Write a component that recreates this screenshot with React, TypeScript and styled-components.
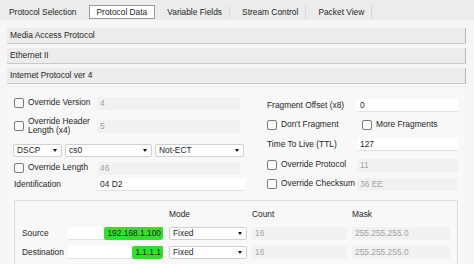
import React from 'react';
import styled, { createGlobalStyle } from 'styled-components';

const GlobalStyle = createGlobalStyle`
  html, body { margin: 0; padding: 0; background: #f6f6f6; }
  body {
    font-family: "Liberation Sans", Arial, sans-serif;
    font-size: 8.4px;
    color: #262626;
  }
`;

const Page = styled.div`
  width: 474px;
  height: 264px;
  overflow: hidden;
  display: flex;
  flex-direction: column;
`;

const TabBar = styled.div`
  height: 20px;
  flex: 0 0 20px;
  background: #ececec;
  display: flex;
  align-items: flex-start;
  padding-left: 1px;
  box-sizing: border-box;
`;

const Tab = styled.div<{ $active?: boolean; $sep?: boolean }>`
  margin-top: 5px;
  height: 14px;
  line-height: 13px;
  padding: 0 7px;
  margin-right: 4px;
  box-sizing: border-box;
  white-space: nowrap;
  background: ${p => (p.$active ? '#ffffff' : 'transparent')};
  border: 1px solid ${p => (p.$active ? '#9c9c9c' : 'transparent')};
  border-right-color: ${p => (p.$active ? '#9c9c9c' : p.$sep ? '#d8d8d8' : 'transparent')};
`;

const Sections = styled.div`
  display: flex;
  flex-direction: column;
  gap: 4px;
  padding: 8px 8px 0 7px;
`;

const SectionBar = styled.div`
  height: 16px;
  box-sizing: border-box;
  background: #ececec;
  border-right: 1px solid #b9b9b9;
  border-bottom: 1px solid #c9c9c9;
  padding-left: 3px;
  line-height: 15px;
`;

const Panel = styled.div`
  margin: 2px 8px 0 8px;
  padding: 8px 8px 0 6px;
  background: #f8f8f8;
  border-top: 1px solid #ececec;
  flex: 1;
`;

const Columns = styled.div`
  display: grid;
  grid-template-columns: 231px 1fr;
  column-gap: 22px;
`;

const Column = styled.div`
  display: flex;
  flex-direction: column;
`;

const Row = styled.div<{ $h: number; $cols?: string }>`
  height: ${p => p.$h}px;
  display: grid;
  grid-template-columns: ${p => p.$cols || '83px 1fr'};
  align-items: center;
`;

const CheckLabel = styled.label`
  display: flex;
  align-items: center;
  gap: 4px;
  line-height: 9.5px;
  white-space: nowrap;
`;

const Box = styled.span`
  flex: 0 0 10px;
  width: 10px;
  height: 10px;
  box-sizing: border-box;
  border: 1px solid #7a7a7a;
  border-radius: 2px;
  background: #fff;
`;

const Field = styled.div<{ $disabled?: boolean; $right?: number }>`
  height: 13px;
  line-height: 13px;
  box-sizing: border-box;
  padding-left: 3px;
  margin-right: ${p => p.$right || 0}px;
  background: ${p => (p.$disabled ? '#f1f1f1' : '#ffffff')};
  border-bottom: 1px solid ${p => (p.$disabled ? '#f1f1f1' : '#e2e2e2')};
  color: ${p => (p.$disabled ? '#a3a3a3' : '#262626')};
`;

const Selects = styled.div`
  display: grid;
  grid-template-columns: 49px 87px 89px;
  column-gap: 3px;
  margin-left: -1px;
`;

const Select = styled.div`
  position: relative;
  height: 13px;
  line-height: 11px;
  box-sizing: border-box;
  border: 1px solid #d0d0d0;
  border-radius: 2px;
  background: #fff;
  padding-left: 3px;
  &::after {
    content: '';
    position: absolute;
    right: 4px;
    top: 4px;
    border-left: 2.5px solid transparent;
    border-right: 2.5px solid transparent;
    border-top: 3px solid #111;
  }
`;

const Plain = styled.span`
  white-space: nowrap;
`;

const Group = styled.div`
  margin: 9px 0 0 0;
  border: 1px solid #dedede;
  border-bottom: none;
  background: #f8f8f8;
  padding: 6px 8px 0 7px;
  display: grid;
  grid-template-columns: 41px 96px 78px 95px 98px;
  column-gap: 5px;
  grid-auto-rows: 14px;
  row-gap: 5px;
  align-items: center;
  height: 80px;
  box-sizing: border-box;
`;

const HeadCell = styled.span<{ $col: number }>`
  grid-column: ${p => p.$col};
`;

const AddrInput = styled.div`
  height: 13px;
  line-height: 13px;
  background: #fff;
  border-bottom: 1px solid #e2e2e2;
  box-sizing: border-box;
  text-align: right;
  padding-right: 1px;
`;

const Mark = styled.span`
  background: #30e02a;
  padding: 1px 2px 2px 3px;
  border-radius: 2px 1px 3px 2px;
`;

export default function App() {
  return (
    <Page>
      <GlobalStyle />
      <TabBar>
        <Tab>Protocol Selection</Tab>
        <Tab $active>Protocol Data</Tab>
        <Tab $sep>Variable Fields</Tab>
        <Tab $sep>Stream Control</Tab>
        <Tab $sep>Packet View</Tab>
      </TabBar>
      <Sections>
        <SectionBar>Media Access Protocol</SectionBar>
        <SectionBar>Ethernet II</SectionBar>
        <SectionBar>Internet Protocol ver 4</SectionBar>
      </Sections>
      <Panel>
        <Columns>
          <Column>
            <Row $h={16}>
              <CheckLabel><Box />Override Version</CheckLabel>
              <Field $disabled $right={5}>4</Field>
            </Row>
            <Row $h={30}>
              <CheckLabel><Box />Override Header<br />Length (x4)</CheckLabel>
              <Field $disabled $right={5}>5</Field>
            </Row>
            <Row $h={18} $cols="1fr">
              <Selects>
                <Select>DSCP</Select>
                <Select>cs0</Select>
                <Select>Not-ECT</Select>
              </Selects>
            </Row>
            <Row $h={18}>
              <CheckLabel><Box />Override Length</CheckLabel>
              <Field $disabled $right={5}>46</Field>
            </Row>
            <Row $h={14}>
              <Plain>Identification</Plain>
              <Field>04 D2</Field>
            </Row>
          </Column>
          <Column>
            <Row $h={20} $cols="90px 1fr">
              <Plain>Fragment Offset (x8)</Plain>
              <Field>0</Field>
            </Row>
            <Row $h={20} $cols="95px 1fr">
              <CheckLabel><Box />Don&apos;t Fragment</CheckLabel>
              <CheckLabel><Box />More Fragments</CheckLabel>
            </Row>
            <Row $h={18} $cols="90px 1fr">
              <Plain>Time To Live (TTL)</Plain>
              <Field>127</Field>
            </Row>
            <Row $h={24} $cols="90px 1fr">
              <CheckLabel><Box />Override Protocol</CheckLabel>
              <Field $disabled>11</Field>
            </Row>
            <Row $h={14} $cols="90px 1fr">
              <CheckLabel><Box />Override Checksum</CheckLabel>
              <Field $disabled>36 EE</Field>
            </Row>
          </Column>
        </Columns>
        <Group>
          <HeadCell $col={3}>Mode</HeadCell>
          <HeadCell $col={4}>Count</HeadCell>
          <HeadCell $col={5}>Mask</HeadCell>
          <Plain>Source</Plain>
          <AddrInput><Mark>192.168.1.100</Mark></AddrInput>
          <Select>Fixed</Select>
          <Field $disabled>16</Field>
          <Field $disabled>255.255.255.0</Field>
          <Plain>Destination</Plain>
          <AddrInput><Mark>1.1.1.1</Mark></AddrInput>
          <Select>Fixed</Select>
          <Field $disabled>16</Field>
          <Field $disabled>255.255.255.0</Field>
        </Group>
      </Panel>
    </Page>
  );
}
